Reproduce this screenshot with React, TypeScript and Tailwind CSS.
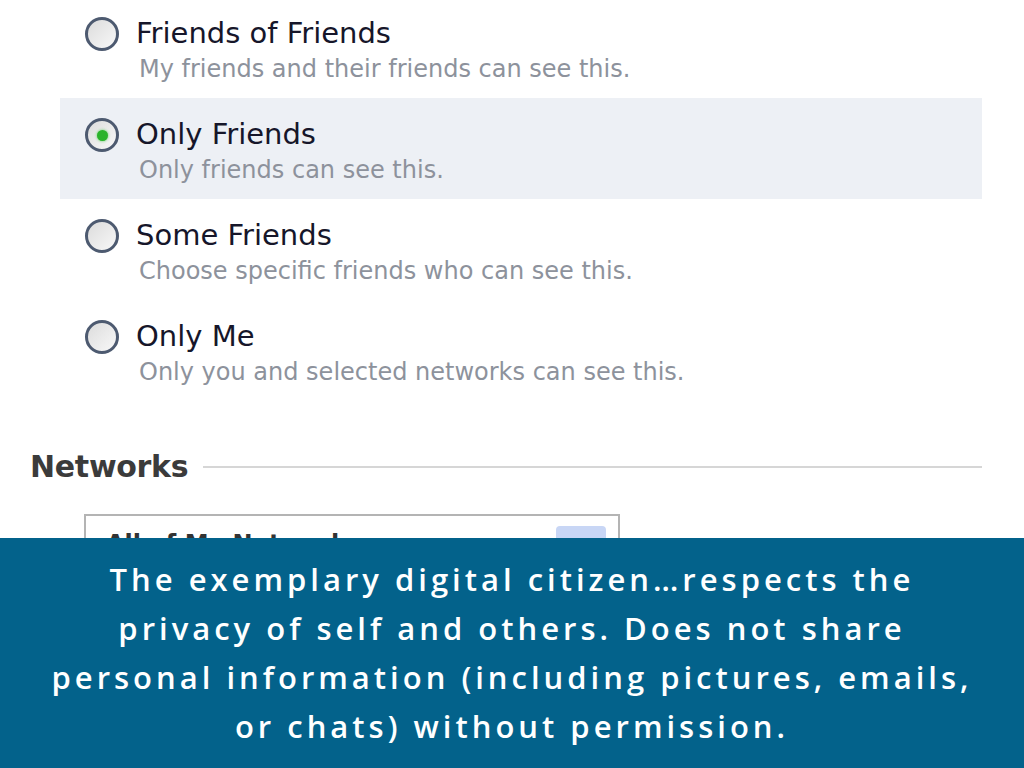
import React from 'react';

const options = [
  { title: 'Friends of Friends', desc: 'My friends and their friends can see this.', checked: false },
  { title: 'Only Friends', desc: 'Only friends can see this.', checked: true },
  { title: 'Some Friends', desc: 'Choose specific friends who can see this.', checked: false },
  { title: 'Only Me', desc: 'Only you and selected networks can see this.', checked: false },
];

function Radio({ checked }: { checked: boolean }) {
  return (
    <div className="flex h-[34px] w-[34px] shrink-0 items-center justify-center rounded-full border-[3px] border-[#4d5a70] bg-gradient-to-br from-[#dcdcdc] to-[#f8f8f8]">
      {checked && <div className="h-[11px] w-[11px] rounded-full bg-[#2bb32b] shadow-[0_0_3px_#5fd35f]" />}
    </div>
  );
}

export default function App() {
  return (
    <div className="relative h-[768px] w-[1024px] overflow-hidden bg-white font-['DejaVu_Sans',sans-serif]">
      <div className="mr-[42px] ml-[60px] mt-[-3px]">
        {options.map((o) => (
          <div
            key={o.title}
            className={`flex h-[101px] items-start gap-[17px] pl-[25px] pt-[20px] ${o.checked ? 'bg-[#edf0f5]' : ''}`}
          >
            <Radio checked={o.checked} />
            <div className="-mt-[3px] flex flex-col">
              <span className="text-[29px] leading-[38px] text-[#16162a]">{o.title}</span>
              <span className="pl-[3px] text-[24px] leading-[35px] text-[#8d929c]">{o.desc}</span>
            </div>
          </div>
        ))}
      </div>

      <div className="mt-[48px] flex items-center pl-[30px] pr-[42px]">
        <span className="text-[30px] font-bold leading-[36px] tracking-[-0.3px] text-[#3b3b3b]">Networks</span>
        <div className="ml-[15px] h-[2px] flex-1 bg-[#d6d6d6]" />
      </div>

      <div className="mt-[29px] ml-[84px] flex h-[60px] w-[536px] items-start justify-between border-2 border-[#b4b4b4] px-[20px] pt-[10px]">
        <span className="text-[24px] font-bold text-[#333]">All of My Networks</span>
        <div className="mr-[-8px] h-[30px] w-[50px] rounded-sm bg-[#c8d6f5]" />
      </div>

      <div className="absolute inset-x-0 bottom-0 top-[538px] flex flex-col items-center bg-[#03628b] pt-[17px]">
        <p className="text-center font-['Open_Sans',sans-serif] text-[31px] font-semibold leading-[49px] tracking-[4px] text-white">
          The exemplary digital citizen…respects the
          <br />
          privacy of self and others. Does not share
          <br />
          personal information (including pictures, emails,
          <br />
          or chats) without permission.
        </p>
      </div>
    </div>
  );
}
